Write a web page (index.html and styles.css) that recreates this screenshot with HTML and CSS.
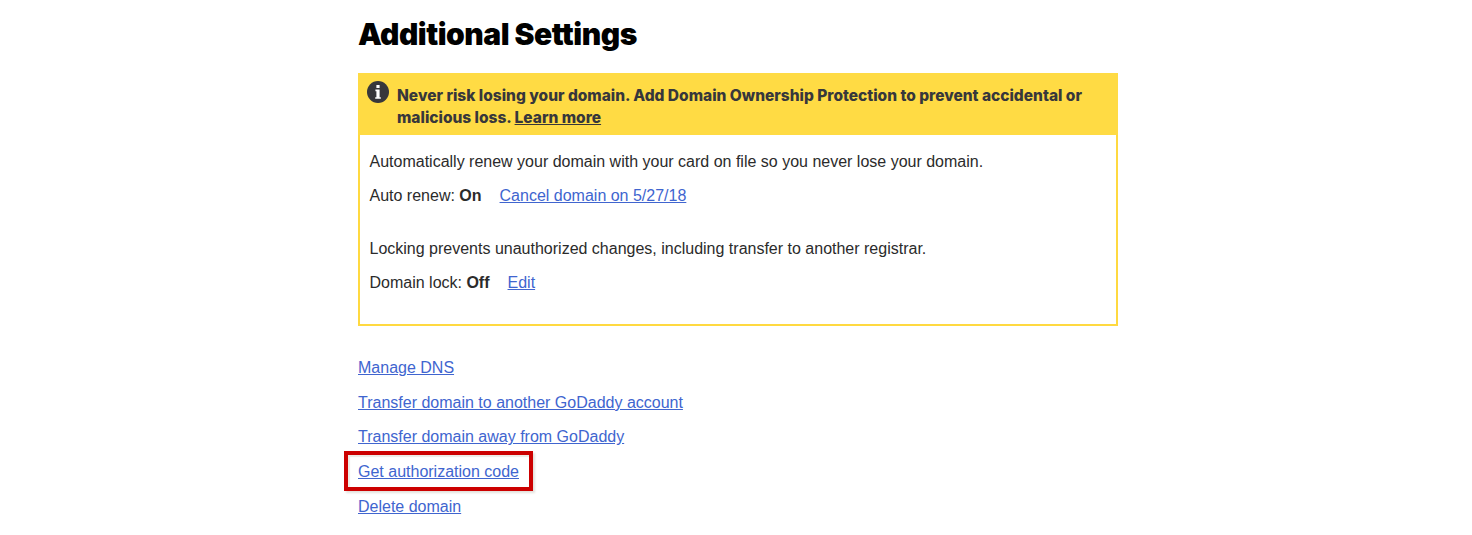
FILE: index.html
```html
<!DOCTYPE html>
<html lang="en">
<head>
    <meta charset="UTF-8">
    <title>Additional Settings</title>
    <link rel="stylesheet" href="styles.css">
</head>
<body>
    <div class="page">
        <h1 class="title">Additional Settings</h1>

        <div class="card">
            <div class="banner">
                <svg class="banner-icon" width="22" height="22" viewBox="0 0 22 22">
                    <circle cx="11" cy="11" r="11" fill="#37373b"/>
                    <rect x="9.4" y="4" width="3.2" height="3" fill="#fff"/>
                    <path d="M8.4 8.6h4.2v7.6h1.2v1.6H8.2v-1.6h1.2v-6H8.4z" fill="#fff"/>
                </svg>
                <p class="banner-text">Never risk losing your domain. Add Domain Ownership Protection to prevent accidental or malicious loss. <a href="#" class="banner-link">Learn more</a></p>
            </div>
            <div class="card-body">
                <p class="line">Automatically renew your domain with your card on file so you never lose your domain.</p>
                <p class="line">Auto renew: <b>On</b><a href="#" class="link action">Cancel domain on 5/27/18</a></p>
                <p class="line section">Locking prevents unauthorized changes, including transfer to another registrar.</p>
                <p class="line">Domain lock: <b>Off</b><a href="#" class="link action">Edit</a></p>
            </div>
        </div>

        <ul class="links">
            <li><a href="#" class="link">Manage DNS</a></li>
            <li><a href="#" class="link">Transfer domain to another GoDaddy account</a></li>
            <li><a href="#" class="link">Transfer domain away from GoDaddy</a></li>
            <li class="marked"><a href="#" class="link">Get authorization code</a><span class="highlight"></span></li>
            <li><a href="#" class="link">Delete domain</a></li>
        </ul>
    </div>
</body>
</html>
```

FILE: styles.css
```css
body {
    margin: 0;
    background-color: #fff;
    font-family: "Liberation Sans", Arial, sans-serif;
    font-size: 16px;
    color: #2b2b2b;
}

.page {
    width: 760px;
    margin-left: 358px;
}

.title {
    margin: 0;
    padding-top: 15px;
    height: 73px;
    box-sizing: border-box;
    font-family: Inter, sans-serif;
    font-weight: 900;
    font-size: 30px;
    letter-spacing: -0.5px;
    line-height: 38px;
    color: #000;
}

.card {
    border: 2px solid #ffd940;
    height: 253px;
    box-sizing: border-box;
}

.banner {
    display: flex;
    gap: 8px;
    background-color: #ffdb44;
    margin: -2px -2px 0;
    height: 62px;
    padding: 8px 9px 0;
    box-sizing: border-box;
}

.banner-icon {
    flex: none;
}

.banner-text {
    margin: 4px 0 0;
    font-family: Inter, sans-serif;
    font-weight: 800;
    font-size: 15.5px;
    line-height: 22px;
    color: #37373b;
}

.banner-link {
    color: #37373b;
}

.card-body {
    padding: 18px 9.5px 0;
}

.line {
    margin: 0 0 16px;
    line-height: 18px;
}

.section {
    margin-top: 35px;
}

.link {
    color: #4065cf;
}

.action {
    margin-left: 18px;
}

.links {
    list-style: none;
    margin: 0;
    padding: 33px 0 0;
}

.links li {
    height: 34.67px;
    line-height: 18px;
}

.marked {
    position: relative;
}

.highlight {
    position: absolute;
    left: -14px;
    top: -12px;
    width: 189px;
    height: 40px;
    box-sizing: border-box;
    border: 4px solid #cc0000;
    box-shadow: 2px 2px 2px #e4e2dc, inset 2px 2px 1px #eceae5;
}
```
